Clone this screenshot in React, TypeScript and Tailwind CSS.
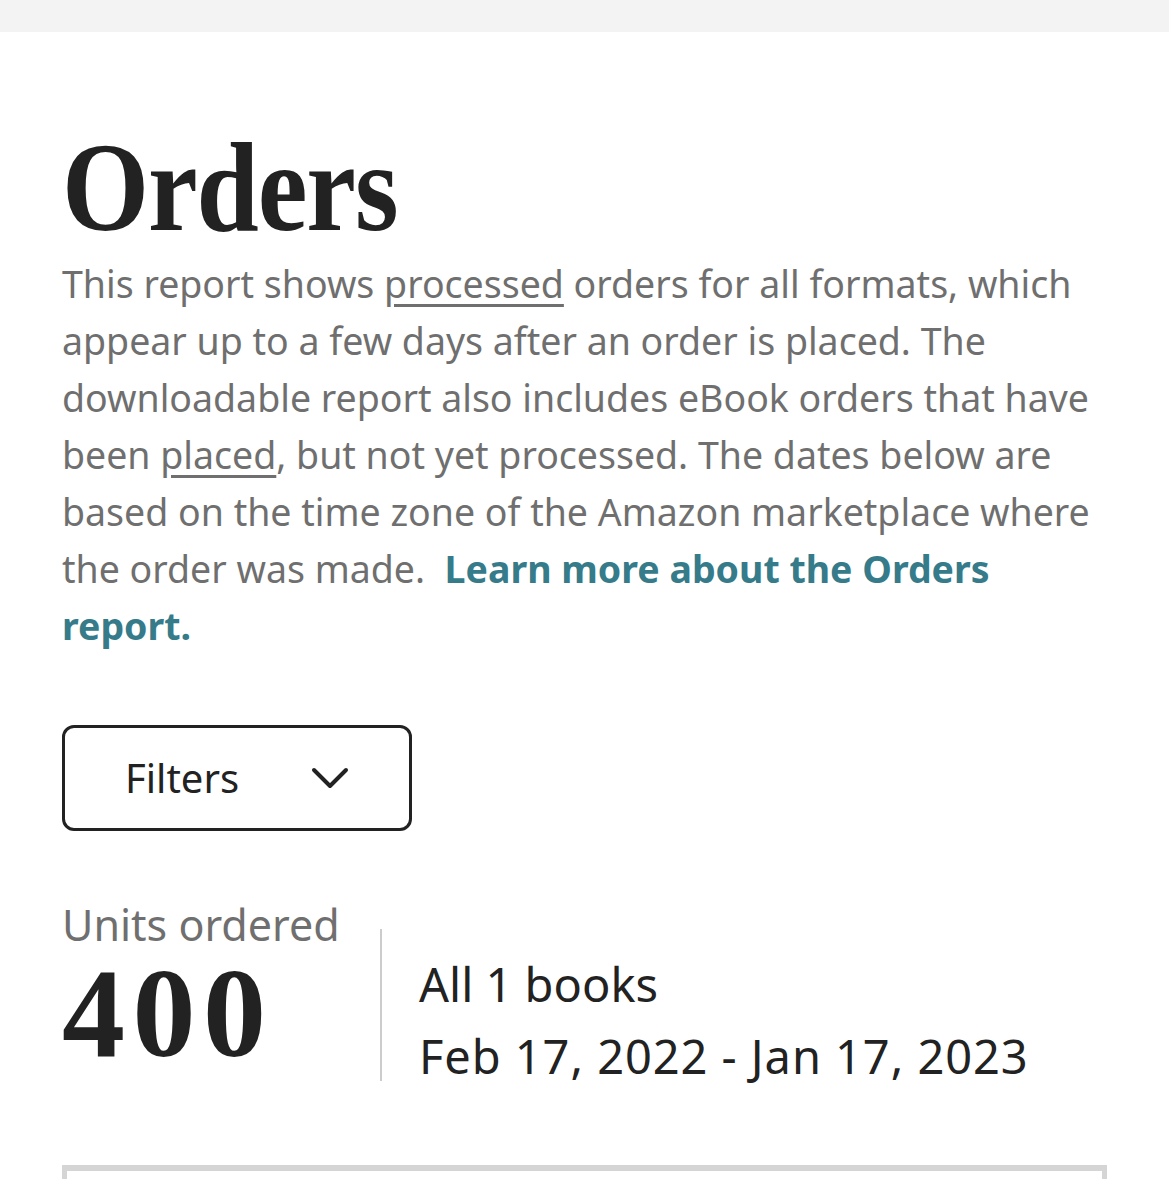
import React from "react"

const sans = "font-['Noto_Sans','Open_Sans',sans-serif]"
const serif = "font-['Liberation_Serif','DejaVu_Serif',serif]"

function ChevronDown() {
  return (
    <svg width="38" height="26" viewBox="0 0 38 26" fill="none">
      <path
        d="M3 5 L19 21 L35 5"
        stroke="#222"
        strokeWidth="4"
        strokeLinecap="round"
        strokeLinejoin="round"
      />
    </svg>
  )
}

export default function App() {
  return (
    <div className="min-h-[1179px] bg-white">
      <div className="h-[32px] bg-[#f3f3f3]" />
      <main className="px-[62px] pt-[103px]">
        <h1 className={`${serif} text-[112px] font-bold leading-[120px] text-[#222]`}>
          <span className="inline-block origin-bottom scale-y-[1.13] tracking-[-0.01em]">Orders</span>
        </h1>
        <p className={`${sans} text-[37.5px] leading-[57px] text-[#6f6f6f]`}>
          This report shows <span className="underline underline-offset-[6px]">processed</span> orders for all formats, which
          <br />
          appear up to a few days after an order is placed. The
          <br />
          downloadable report also includes eBook orders that have
          <br />
          been <span className="underline underline-offset-[6px]">placed</span>, but not yet processed. The dates below are
          <br />
          based on the time zone of the Amazon marketplace where
          <br />
          the order was made.{"\u00a0 "}
          <a href="#" className="font-bold text-[#367b8a]">
            Learn more about the Orders
            <br />
            report.
          </a>
        </p>

        <button
          className={`${sans} mt-[71px] flex h-[106px] w-[350px] items-center justify-between rounded-[12px] border-[3px] border-[#222] pl-[60px] pr-[60px] text-[40px] text-[#222]`}
        >
          <span>Filters</span>
          <ChevronDown />
        </button>

        <section className="mt-[70px] flex h-[180px] items-start">
          <div className="w-[318px] shrink-0">
            <div className={`${sans} text-[43px] leading-[48px] text-[#6f6f6f]`}>Units ordered</div>
            <div className={`${serif} mt-[10px] text-[126px] font-bold leading-[110px] tracking-[0.06em] text-[#222]`}>
              400
            </div>
          </div>
          <div className="mt-[28px] h-[152px] w-[2px] bg-[#cccccc]" />
          <div className={`${sans} mt-[47px] pl-[37px] text-[47px] leading-[72px] text-[#222]`}>
            <div>All 1 books</div>
            <div className="tracking-[0.02em]">Feb 17, 2022 - Jan 17, 2023</div>
          </div>
        </section>

        <div className="mt-[84px] h-[40px] border-x-[5px] border-t-[6px] border-[#d5d5d5]" />
      </main>
    </div>
  )
}
